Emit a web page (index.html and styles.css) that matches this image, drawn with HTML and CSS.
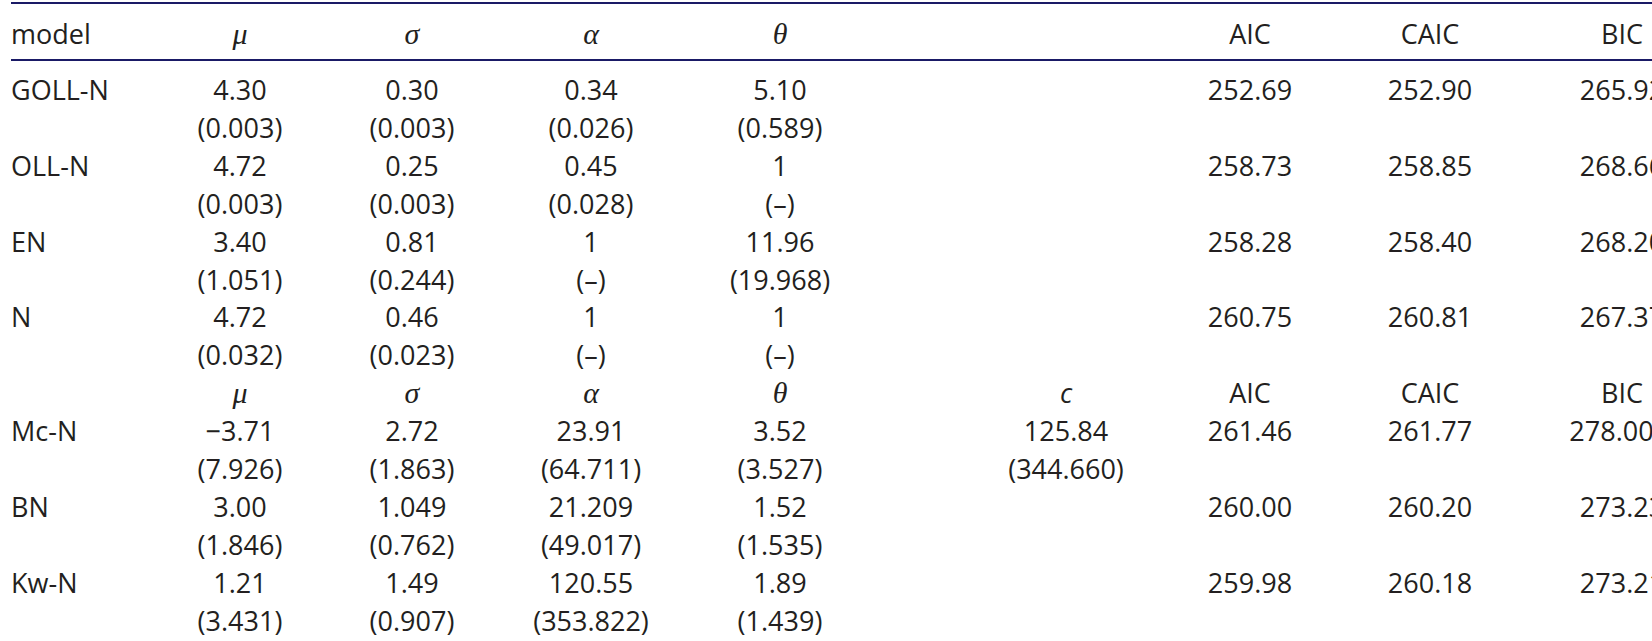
FILE: index.html
```html
<!DOCTYPE html>
<html lang="en">
<head>
    <meta charset="UTF-8">
    <title>Model comparison</title>
    <link rel="stylesheet" href="styles.css">
</head>
<body>
    <table class="fit">
        <colgroup>
            <col class="c-name">
            <col class="c-mu">
            <col class="c-sigma">
            <col class="c-alpha">
            <col class="c-theta">
            <col class="c-c">
            <col class="c-aic">
            <col class="c-caic">
            <col class="c-bic">
        </colgroup>
        <thead>
            <tr>
                <th class="name">model</th>
                <th><i class="sym">μ</i></th>
                <th><i class="sym">σ</i></th>
                <th><i class="sym">α</i></th>
                <th><i class="sym">θ</i></th>
                <th></th>
                <th>AIC</th>
                <th>CAIC</th>
                <th>BIC</th>
            </tr>
        </thead>
        <tbody>
            <tr class="first">
                <td class="name">GOLL-N</td>
                <td>4.30<br>(0.003)</td>
                <td>0.30<br>(0.003)</td>
                <td>0.34<br>(0.026)</td>
                <td>5.10<br>(0.589)</td>
                <td></td>
                <td>252.69</td>
                <td>252.90</td>
                <td>265.92</td>
            </tr>
            <tr>
                <td class="name">OLL-N</td>
                <td>4.72<br>(0.003)</td>
                <td>0.25<br>(0.003)</td>
                <td>0.45<br>(0.028)</td>
                <td>1<br>(–)</td>
                <td></td>
                <td>258.73</td>
                <td>258.85</td>
                <td>268.66</td>
            </tr>
            <tr>
                <td class="name">EN</td>
                <td>3.40<br>(1.051)</td>
                <td>0.81<br>(0.244)</td>
                <td>1<br>(–)</td>
                <td>11.96<br>(19.968)</td>
                <td></td>
                <td>258.28</td>
                <td>258.40</td>
                <td>268.20</td>
            </tr>
            <tr>
                <td class="name">N</td>
                <td>4.72<br>(0.032)</td>
                <td>0.46<br>(0.023)</td>
                <td>1<br>(–)</td>
                <td>1<br>(–)</td>
                <td></td>
                <td>260.75</td>
                <td>260.81</td>
                <td>267.37</td>
            </tr>
            <tr>
                <td class="name"></td>
                <td><i class="sym">μ</i></td>
                <td><i class="sym">σ</i></td>
                <td><i class="sym">α</i></td>
                <td><i class="sym">θ</i></td>
                <td class="cv"><i class="var">c</i></td>
                <td>AIC</td>
                <td>CAIC</td>
                <td>BIC</td>
            </tr>
            <tr>
                <td class="name">Mc-N</td>
                <td>−3.71<br>(7.926)</td>
                <td>2.72<br>(1.863)</td>
                <td>23.91<br>(64.711)</td>
                <td>3.52<br>(3.527)</td>
                <td class="cv">125.84<br>(344.660)</td>
                <td>261.46</td>
                <td>261.77</td>
                <td class="nudge">278.00</td>
            </tr>
            <tr>
                <td class="name">BN</td>
                <td>3.00<br>(1.846)</td>
                <td>1.049<br>(0.762)</td>
                <td>21.209<br>(49.017)</td>
                <td>1.52<br>(1.535)</td>
                <td></td>
                <td>260.00</td>
                <td>260.20</td>
                <td>273.23</td>
            </tr>
            <tr>
                <td class="name">Kw-N</td>
                <td>1.21<br>(3.431)</td>
                <td>1.49<br>(0.907)</td>
                <td>120.55<br>(353.822)</td>
                <td>1.89<br>(1.439)</td>
                <td></td>
                <td>259.98</td>
                <td>260.18</td>
                <td>273.21</td>
            </tr>
        </tbody>
    </table>
</body>
</html>
```

FILE: styles.css
```css
* {
    margin: 0;
    padding: 0;
    box-sizing: border-box;
}

html,
body {
    overflow: hidden;
    background: #fff;
}

body {
    padding-top: 2px;
    font-family: "Open Sans", "Noto Sans", sans-serif;
    font-size: 27px;
    line-height: 37.9px;
    color: #231f20;
}

.fit {
    margin-left: 11px;
    width: 1713px;
    table-layout: fixed;
    border-collapse: separate;
    border-spacing: 0;
}

.c-name { width: 152px; }
.c-mu { width: 154px; }
.c-sigma { width: 190px; }
.c-alpha { width: 168px; }
.c-theta { width: 210px; }
.c-c { width: 275px; }
.c-aic { width: 180px; }
.c-caic { width: 180px; }
.c-bic { width: 204px; }

th,
td {
    font-weight: normal;
    text-align: center;
    vertical-align: top;
    white-space: nowrap;
}

th {
    padding: 10.6px 0 6.5px;
    border-top: 2px solid #1a1a66;
    border-bottom: 2px solid #1a1a66;
}

.first td {
    padding-top: 10px;
}

.name {
    text-align: left;
}

/* greek symbols set like math italics */
.sym {
    font-family: "Liberation Serif", "Times New Roman", serif;
    font-size: 30px;
    line-height: 1;
}

.var {
    font-style: italic;
}

/* the c column sits right of centre in its slot */
.cv {
    padding-left: 87px;
}

.nudge {
    padding-right: 21px;
}
```
